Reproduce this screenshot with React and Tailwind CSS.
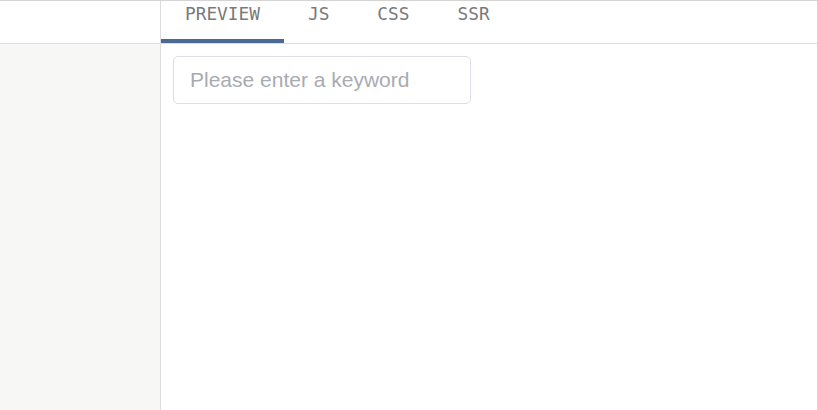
import React from 'react';

const tabs = ['PREVIEW', 'JS', 'CSS', 'SSR'];

export default function App() {
    return (
        <div className="h-[410px] w-[818px] flex border-t border-r border-[#d4d4d4] bg-white overflow-hidden">
            {/* Sidebar */}
            <div className="w-[161px] flex-shrink-0 flex flex-col border-r border-[#dcdcdc]">
                <div className="h-[43px] bg-white border-b border-[#dcdcdc]" />
                <div className="flex-1 bg-[#f7f7f5]" />
            </div>

            {/* Main */}
            <div className="flex-1 flex flex-col min-w-0">
                <div className="h-[43px] flex border-b border-[#dcdcdc]">
                    {tabs.map((tab, i) => (
                        <div key={tab} className="relative px-6 h-full">
                            <span className="block leading-[26px] text-[17.8px] text-[#7a7a7a] font-['DejaVu_Sans_Mono',monospace]">
                                {tab}
                            </span>
                            {i === 0 && <div className="absolute left-0 right-0 bottom-0 h-[4px] bg-[#4a6a95]" />}
                        </div>
                    ))}
                </div>
                <div className="p-3">
                    <input
                        type="text"
                        placeholder="Please enter a keyword"
                        className="w-[298px] h-[48px] px-4 rounded-[5px] border border-[#dcdfe6] text-[21px] text-[#606266] placeholder:text-[#a8abb2] outline-none font-['Liberation_Sans',Arial,sans-serif]"
                    />
                </div>
            </div>
        </div>
    );
}
